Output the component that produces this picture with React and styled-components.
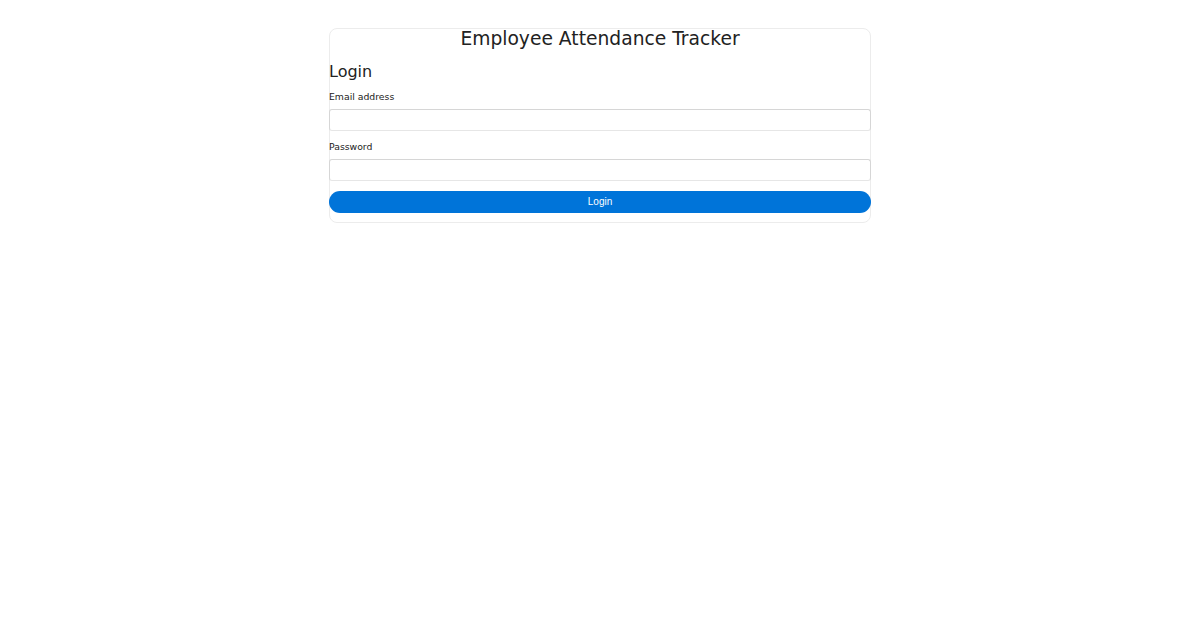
import React from 'react';
import styled, { createGlobalStyle } from 'styled-components';

const GlobalStyle = createGlobalStyle`
    body {
        margin: 0;
        background: #fff;
        font-family: "DejaVu Sans", sans-serif;
        color: #222;
    }
`;

const Card = styled.div`
    width: 542px;
    margin: 28px auto 0;
    border: 1px solid #ececec;
    border-radius: 8px;
    box-sizing: border-box;
    padding: 0 0 9px;
    display: flex;
    flex-direction: column;
`;

const Title = styled.h1`
    margin: 0;
    font-size: 18.7px;
    font-weight: 400;
    line-height: 20px;
    text-align: center;
    color: #222;
`;

const Heading = styled.h2`
    margin: 12px 0 0 -1px;
    font-size: 16px;
    font-weight: 400;
    line-height: 21px;
    color: #222;
`;

const Field = styled.label`
    display: flex;
    flex-direction: column;
    margin: ${p => p.$gap}px 0 0 -1px;
    font-size: 9.3px;
    line-height: 14px;
    color: #222;
`;

const Input = styled.input`
    margin: 5px -1px 0 0;
    height: 22px;
    box-sizing: border-box;
    border: 1px solid #d6d6d6;
    border-bottom-color: #e6e6e6;
    border-radius: 3px;
    padding: 0 6px;
    font-family: inherit;
    font-size: 11px;
    outline: none;
`;

const Button = styled.button`
    margin: 10px -1px 0;
    height: 22px;
    border: none;
    border-radius: 11px;
    background: #0074d9;
    color: #fff;
    font-family: "Liberation Sans", Arial, sans-serif;
    font-size: 10px;
    line-height: 20px;
    cursor: pointer;
`;

export default function App() {
    return (
        <>
            <GlobalStyle />
            <Card>
                <Title>Employee Attendance Tracker</Title>
                <Heading>Login</Heading>
                <Field $gap={8}>
                    Email address
                    <Input type="email" />
                </Field>
                <Field $gap={9}>
                    Password
                    <Input type="password" />
                </Field>
                <Button>Login</Button>
            </Card>
        </>
    );
}
